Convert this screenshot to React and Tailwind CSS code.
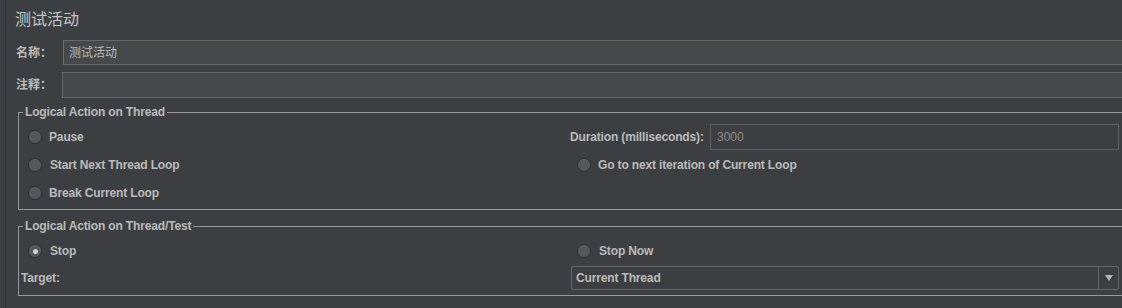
import React from "react";

function Radio({ checked }) {
  return (
    <span className="relative w-[14px] h-[14px] shrink-0 rounded-full border border-[#2c2e30] bg-[#55585a] shadow-[inset_0_1px_0_#606365] flex items-center justify-center">
      {checked && <span className="w-[5px] h-[5px] rounded-full bg-[#d2d2d2]" />}
    </span>
  );
}

function RadioItem({ checked, label, gap = "gap-[7px]" }) {
  return (
    <div className={`flex items-center ${gap}`}>
      <Radio checked={checked} />
      <span className="font-bold tracking-[-0.15px]">{label}</span>
    </div>
  );
}

export default function App() {
  const cjk = "font-['Liberation_Sans','Noto_Sans_CJK_SC',sans-serif]";
  return (
    <div
      className={`w-[1122px] h-[308px] overflow-hidden bg-[#3c3f41] text-[#bbbbbb] text-[12px] leading-[14px] flex ${cjk}`}
    >
      <div className="w-[5px] shrink-0" />
      <div className="w-px shrink-0 bg-[#2f3133]" />
      <div className="w-[1130px] shrink-0 flex flex-col">
        {/* Title */}
        <div className="mt-[10px] h-[20px] pl-[9px] text-[16px] leading-[20px] text-[#c4c4c4]">
          测试活动
        </div>

        {/* Name row */}
        <div className="mt-[10px] h-[25px] flex items-center">
          <span className="w-[57px] pl-[10px] font-bold">名称：</span>
          <div className="flex-1 h-[25px] border border-[#666869] bg-[#45494a] flex items-center pl-[5px]">
            测试活动
          </div>
        </div>

        {/* Comment row */}
        <div className="mt-[7px] h-[26px] flex items-center">
          <span className="w-[56px] pl-[10px] font-bold">注释：</span>
          <div className="flex-1 h-[26px] border border-[#666869] bg-[#45494a]" />
        </div>

        {/* Fieldset 1 */}
        <fieldset className="mt-[7px] ml-[12px] w-[1106px] h-[105px] border border-[#999999] p-0">
          <legend className="ml-[4px] px-[2px] font-bold leading-[14px] tracking-[-0.15px]">
            Logical Action on Thread
          </legend>
          <div className="mt-[5px] h-[26px] flex items-center">
            <div className="w-[551px] pl-[9px]">
              <RadioItem label="Pause" />
            </div>
            <div className="flex items-center">
              <span className="font-bold w-[140px] tracking-[-0.15px]">Duration (milliseconds):</span>
              <div className="w-[409px] h-[26px] border border-[#5e6162] flex items-center pl-[6px] text-[#8c8c8c]">
                3000
              </div>
            </div>
          </div>
          <div className="mt-[1px] h-[27px] flex items-center">
            <div className="w-[551px] pl-[9px]">
              <RadioItem label="Start Next Thread Loop" gap="gap-[8px]" />
            </div>
            <div className="pl-[7px]">
              <RadioItem label="Go to next iteration of Current Loop" />
            </div>
          </div>
          <div className="mt-[1px] h-[27px] flex items-center">
            <div className="w-[551px] pl-[9px]">
              <RadioItem label="Break Current Loop" />
            </div>
          </div>
        </fieldset>

        {/* Fieldset 2 */}
        <fieldset className="mt-[9px] ml-[12px] w-[1106px] h-[77px] border border-[#999999] p-0">
          <legend className="ml-[4px] px-[2px] font-bold leading-[14px] tracking-[-0.15px]">
            Logical Action on Thread/Test
          </legend>
          <div className="mt-[5px] h-[26px] flex items-center">
            <div className="w-[551px] pl-[9px]">
              <RadioItem checked label="Stop" gap="gap-[8px]" />
            </div>
            <div className="pl-[7px]">
              <RadioItem label="Stop Now" gap="gap-[8px]" />
            </div>
          </div>
          <div className="mt-[1px] h-[25px] flex items-center">
            <div className="w-[552px] pl-[2px] font-bold tracking-[-0.15px]">Target:</div>
            <div className="w-[548px] h-[24px] border border-[#646667] rounded-[2px] flex items-stretch">
              <div className="flex-1 flex items-center pl-[4px] font-bold tracking-[-0.15px]">Current Thread</div>
              <div className="w-[20px] border-l border-[#646667] flex items-center justify-center">
                <svg width="10" height="8" viewBox="0 0 10 8">
                  <path d="M1 1 L9 1 L5 7 Z" fill="#b4b4b4" />
                </svg>
              </div>
            </div>
          </div>
        </fieldset>
      </div>
    </div>
  );
}
